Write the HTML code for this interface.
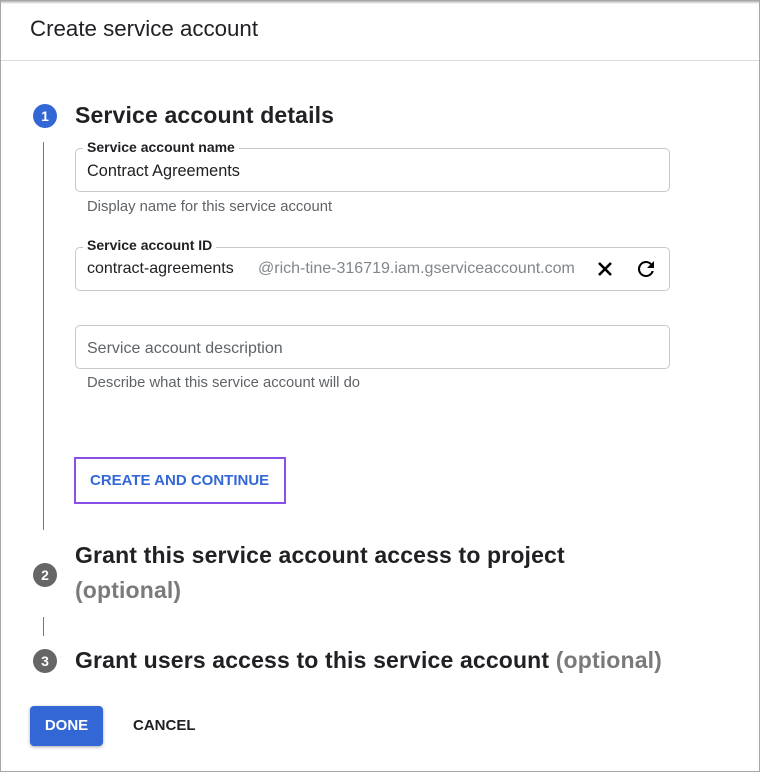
<!DOCTYPE html>
<html><head><style>
body{margin:0;width:760px;height:773px;background:#fff;font-family:"Liberation Sans",Arial,sans-serif;position:relative;overflow:hidden}
.frame{position:absolute;left:0;top:0;width:758px;height:771px;border:1px solid #a6a6a6;border-top:none}
.shadow{position:absolute;left:0;top:0;width:760px;height:4px;background:linear-gradient(#9a9a9a,#fff)}
.abs{position:absolute;white-space:nowrap}
.title{left:30px;top:16px;font-size:22.3px;color:#202124}
.hr{left:1px;top:60px;width:758px;height:1px;background:#dadce0}
.circ{width:24px;height:24px;border-radius:50%;color:#fff;font-size:14px;font-weight:bold;text-align:center;line-height:24px}
.h{font-size:23px;color:#202124;font-weight:bold;letter-spacing:0.15px}
.opt{color:#7a7a7a;font-weight:bold;letter-spacing:0.15px}
.field{left:75px;width:593px;height:42px;border:1px solid #c8c8c8;border-radius:5px}
.lab{font-size:14px;font-weight:bold;color:#202124;background:#fff;padding:0 4px}
.val{font-size:16.3px;color:#202124}
.help{font-size:14.8px;color:#5f6368}
.vline{left:43px;width:1px;background:#777}
</style></head><body>
<div class="shadow"></div>
<div class="frame"></div>
<div class="abs title">Create service account</div>
<div class="abs hr"></div>

<div class="abs circ" style="left:33px;top:104px;background:#3367d6">1</div>
<div class="abs h" style="left:75px;top:102px">Service account details</div>
<div class="abs vline" style="top:142px;height:388px"></div>

<div class="abs field" style="top:148px"></div>
<div class="abs lab" style="left:83px;top:139px">Service account name</div>
<div class="abs val" style="left:87px;top:162px">Contract Agreements</div>
<div class="abs help" style="left:87px;top:199px">Display name for this service account</div>

<div class="abs field" style="top:247px"></div>
<div class="abs lab" style="left:83px;top:237px">Service account ID</div>
<div class="abs val" style="left:87px;top:260px;font-size:16px">contract-agreements</div>
<div class="abs val" style="left:258px;top:260px;color:#80868b;font-size:16px">@rich-tine-316719.iam.gserviceaccount.com</div>
<svg class="abs" style="left:596px;top:260px" width="18" height="18" viewBox="0 0 18 18"><path d="M3 3L15 15M15 3L3 15" stroke="#000" stroke-width="2.6"/></svg>
<svg class="abs" style="left:634px;top:257px" width="24" height="24" viewBox="0 0 24 24"><path d="M17.65 6.35A7.96 7.96 0 0 0 12 4a8 8 0 1 0 7.73 10h-2.08A6 6 0 1 1 12 6c1.66 0 3.14.69 4.22 1.78L13 11h7V4z" fill="#000"/></svg>

<div class="abs field" style="top:325px"></div>
<div class="abs val" style="left:87px;top:340px;color:#5f6368;font-size:16px">Service account description</div>
<div class="abs help" style="left:87px;top:375px">Describe what this service account will do</div>

<div class="abs" style="left:74px;top:457px;width:208px;height:43px;border:2px solid #8a4fe8"></div>
<div class="abs" style="left:90px;top:472px;font-size:15px;font-weight:bold;color:#3367d6">CREATE AND CONTINUE</div>

<div class="abs circ" style="left:33px;top:563px;background:#666">2</div>
<div class="abs h" style="left:75px;top:542px">Grant this service account access to project</div>
<div class="abs h opt" style="left:75px;top:577px">(optional)</div>
<div class="abs vline" style="top:617px;height:19px"></div>

<div class="abs circ" style="left:33px;top:649px;background:#666">3</div>
<div class="abs h" style="left:75px;top:647px">Grant users access to this service account <span class="opt">(optional)</span></div>

<div class="abs" style="left:30px;top:706px;width:73px;height:40px;background:#3367d6;border-radius:4px;box-shadow:0 1px 3px rgba(0,0,0,.35);color:#fff;font-weight:bold;font-size:15px;text-align:center;line-height:40px">DONE</div>
<div class="abs" style="left:133px;top:717px;font-size:15px;font-weight:bold;color:#202124">CANCEL</div>
</body></html>
